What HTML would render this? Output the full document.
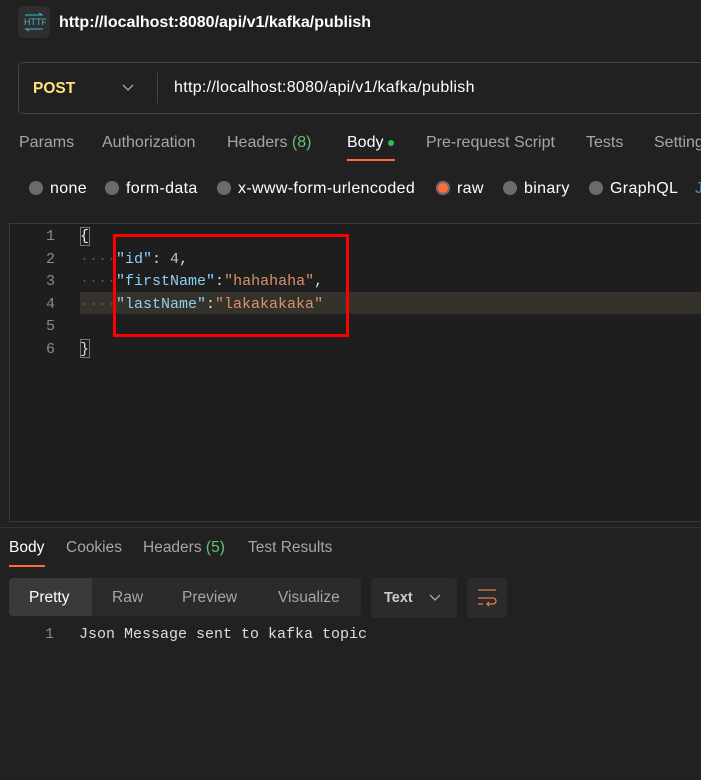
<!DOCTYPE html>
<html><head><style>
body{margin:0;width:701px;height:780px;background:#212121;font-family:"Liberation Sans",sans-serif;color:#fff;position:relative;overflow:hidden}
.a{position:absolute;white-space:nowrap}
.mono{font-family:"Liberation Mono",monospace;font-size:15px}
.tab{font-size:16px;color:#a6a6a6}
.rl{font-size:16px;letter-spacing:0.35px}
.rad{width:14px;height:14px;border-radius:50%;background:#6b6b6b;position:absolute}
</style></head><body>
<div class="a" style="left:18px;top:6px;width:32px;height:32px;background:#2e2e2e;border-radius:5px"></div>
<svg class="a" style="left:22px;top:12px" width="24" height="20" viewBox="0 0 24 20"><path d="M3 3h17l-3-2M21 17H4l3 2" stroke="#3fb8d4" fill="none" stroke-width="1"/><text x="2" y="13" font-size="9" fill="#3fb8d4" font-family="Liberation Sans">HTTP</text></svg>
<div class="a" style="left:59px;top:14px;font-size:16px;font-weight:bold">http://localhost:8080/api/v1/kafka/publish</div>
<div class="a" style="left:18px;top:62px;width:700px;height:50px;border:1px solid #444;border-radius:5px;background:#212121"></div>
<div class="a" style="left:33px;top:80px;font-size:15.5px;font-weight:bold;color:#ffe47e">POST</div>
<svg class="a" style="left:122px;top:84px" width="12" height="8"><path d="M1 1l5 5 5-5" stroke="#aaa" fill="none" stroke-width="1.3"/></svg>
<div class="a" style="left:157px;top:73px;width:1px;height:30px;background:#444"></div>
<div class="a" style="left:174px;top:79px;font-size:16px;letter-spacing:0.3px">http://localhost:8080/api/v1/kafka/publish</div>
<div class="a tab" style="left:19px;top:134px">Params</div>
<div class="a tab" style="left:102px;top:134px">Authorization</div>
<div class="a tab" style="left:227px;top:134px">Headers <span style="color:#5fc47b">(8)</span></div>
<div class="a tab" style="left:347px;top:134px;color:#fff">Body</div>
<div class="a" style="left:388px;top:140px;width:6px;height:6px;border-radius:50%;background:#2ebd59"></div>
<div class="a" style="left:347px;top:159px;width:48px;height:2px;background:#ff6c37"></div>
<div class="a tab" style="left:426px;top:134px">Pre-request Script</div>
<div class="a tab" style="left:586px;top:134px">Tests</div>
<div class="a tab" style="left:654px;top:134px">Settings</div>
<div class="rad" style="left:29px;top:181px"></div><div class="a rl" style="left:50px;top:180px">none</div>
<div class="rad" style="left:105px;top:181px"></div><div class="a rl" style="left:126px;top:180px">form-data</div>
<div class="rad" style="left:217px;top:181px"></div><div class="a rl" style="left:238px;top:180px">x-www-form-urlencoded</div>
<div class="rad" style="left:436px;top:181px;background:#ff6c37;box-shadow:0 0 0 2px #6b6b6b inset;border:0"></div><div class="a rl" style="left:457px;top:180px">raw</div>
<div class="rad" style="left:503px;top:181px"></div><div class="a rl" style="left:524px;top:180px">binary</div>
<div class="rad" style="left:589px;top:181px"></div><div class="a rl" style="left:610px;top:180px">GraphQL</div>
<div class="a rl" style="left:695px;top:180px;color:#3a8fe8">J</div>
<div class="a" style="left:9px;top:223px;width:700px;height:297px;border:1px solid #3a3a3a;background:#1e1e1e"></div>
<div class="a" style="left:80px;top:292px;width:630px;height:22px;background:#35322b"></div>
<div class="a" style="left:80px;top:227px;width:8px;height:17px;border:1px solid #777"></div>
<div class="a" style="left:80px;top:339px;width:8px;height:17px;border:1px solid #777"></div>
<div class="a mono" style="left:40px;top:226px;color:#8a8a8a;line-height:22.5px;text-align:right;width:15px">1<br>2<br>3<br>4<br>5<br>6</div>
<div class="a mono" style="left:80px;top:226px;line-height:22.5px;color:#ddd"><span style="color:#eee">{</span><br><span style="color:#555">····</span><span style="color:#8fd0f5">"id"</span>: <span style="color:#b5cea8">4</span>,<br><span style="color:#555">····</span><span style="color:#8fd0f5">"firstName"</span>:<span style="color:#d9926b">"hahahaha"</span>,<br><span style="color:#555">····</span><span style="color:#8fd0f5">"lastName"</span>:<span style="color:#d9926b">"lakakakaka"</span><br><br>}</div>
<div class="a" style="left:113px;top:234px;width:230px;height:97px;border:3px solid #f00"></div>
<div class="a" style="left:0;top:527px;width:701px;height:1px;background:#333"></div>
<div class="a" style="left:9px;top:539px;font-size:15.5px">Body</div>
<div class="a" style="left:9px;top:565px;width:36px;height:2px;background:#ff6c37"></div>
<div class="a tab" style="left:66px;top:539px;font-size:15.5px">Cookies</div>
<div class="a tab" style="left:143px;top:539px;font-size:15.5px">Headers <span style="color:#5fc47b">(5)</span></div>
<div class="a tab" style="left:248px;top:539px;font-size:15.5px">Test Results</div>
<div class="a" style="left:9px;top:578px;width:352px;height:38px;background:#2b2b2b;border-radius:4px"></div>
<div class="a" style="left:9px;top:578px;width:83px;height:38px;background:#3a3a3a;border-radius:4px 0 0 4px"></div>
<div class="a" style="left:29px;top:589px;font-size:15.5px">Pretty</div>
<div class="a tab" style="left:112px;top:589px;font-size:15.5px">Raw</div>
<div class="a tab" style="left:182px;top:589px;font-size:15.5px">Preview</div>
<div class="a tab" style="left:278px;top:589px;font-size:15.5px">Visualize</div>
<div class="a" style="left:371px;top:578px;width:86px;height:40px;background:#2b2b2b;border-radius:4px"></div>
<div class="a" style="left:384px;top:590px;font-size:14.5px;font-weight:bold;color:#ccc">Text</div>
<svg class="a" style="left:429px;top:594px" width="12" height="8"><path d="M1 1l5 5 5-5" stroke="#aaa" fill="none" stroke-width="1.3"/></svg>
<div class="a" style="left:467px;top:578px;width:40px;height:40px;background:#2b2b2b;border-radius:4px"></div>
<svg class="a" style="left:477px;top:588px" width="20" height="20"><path d="M1 2h18M1 10h15a3 3 0 0 1 0 6h-6M12 14l-2 2 2 2M1 16h5" stroke="#e8764a" fill="none" stroke-width="1.3"/></svg>
<div class="a mono" style="left:45px;top:626px;color:#8a8a8a">1</div>
<div class="a mono" style="left:79px;top:626px;color:#ddd">Json Message sent to kafka topic</div>
</body></html>
